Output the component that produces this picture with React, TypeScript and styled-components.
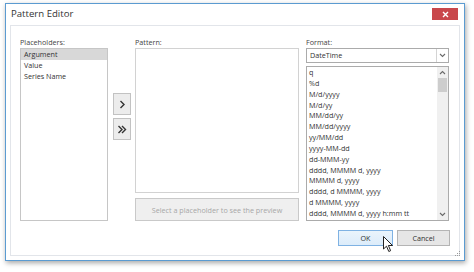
import * as React from 'react';
import styled, { createGlobalStyle } from 'styled-components';

const GlobalStyle = createGlobalStyle`
  body {
    margin: 0;
    width: 474px;
    height: 272px;
    background: #ffffff;
    font-family: "Open Sans", "Noto Sans", sans-serif;
    color: #3c3c3c;
    overflow: hidden;
  }
`;

const Window = styled.div`
  position: relative;
  margin: 3px 0 0 5px;
  width: 458px;
  height: 256px;
  border: 1px solid #5b9bd1;
  background: #ffffff;
  box-shadow: 1px 2px 5px rgba(0, 0, 0, 0.35);
  display: flex;
  flex-direction: column;
`;

const TitleBar = styled.div`
  height: 21px;
  display: flex;
  align-items: flex-start;
  justify-content: space-between;
  padding: 0 6px 0 5px;
`;

const Title = styled.span`
  font-size: 9.6px;
  line-height: 20px;
  color: #333;
`;

const CloseButton = styled.div`
  margin-top: 4px;
  width: 26px;
  height: 12px;
  background: #c9474b;
  display: flex;
  align-items: center;
  justify-content: center;
`;

const Body = styled.div`
  flex: 1;
  margin: 0 4px 4px 4px;
  border: 1px solid #e2e5ea;
  display: flex;
  flex-direction: column;
  padding: 10px 9px 0 9px;
`;

const Columns = styled.div`
  display: flex;
  height: 186px;
`;

const Column = styled.div`
  display: flex;
  flex-direction: column;
  width: ${p => p.$w}px;
  margin-left: ${p => p.$ml || 0}px;
`;

const Label = styled.div`
  font-size: 7.2px;
  line-height: 12px;
  height: 12px;
  color: #444;
`;

const ListBox = styled.div`
  height: 173px;
  border: 1px solid #c6c6c6;
  background: #fff;
  box-sizing: border-box;
`;

const ListItem = styled.div`
  font-size: 7.2px;
  line-height: 11px;
  height: 11px;
  padding-left: 3px;
  background: ${p => (p.$selected ? '#d8d8d8' : 'transparent')};
  color: #333;
`;

const ArrowColumn = styled.div`
  display: flex;
  flex-direction: column;
  gap: 3px;
  padding-top: 57px;
  margin-left: 5px;
`;

const ArrowButton = styled.div`
  width: 18px;
  height: 22px;
  box-sizing: border-box;
  border: 1px solid #c2c2c2;
  background: #ececec;
  display: flex;
  align-items: center;
  justify-content: center;
`;

const PatternBox = styled.div`
  height: 145px;
  border: 1px solid #d2d2d2;
  box-sizing: border-box;
  background: #fff;
`;

const PreviewButton = styled.div`
  margin-top: 5px;
  height: 23px;
  box-sizing: border-box;
  border: 1px solid #c9c9c9;
  background: #efefef;
  color: #a7a7a7;
  font-size: 7.2px;
  display: flex;
  align-items: center;
  justify-content: center;
`;

const Combo = styled.div`
  height: 15px;
  box-sizing: border-box;
  border: 1px solid #ababab;
  display: flex;
  background: #fff;
`;

const ComboText = styled.div`
  flex: 1;
  font-size: 7.2px;
  line-height: 13px;
  padding-left: 3px;
  color: #333;
`;

const ComboArrow = styled.div`
  width: 11px;
  border-left: 1px solid #d4d4d4;
  display: flex;
  align-items: center;
  justify-content: center;
`;

const FormatList = styled.div`
  margin-top: 3px;
  height: 155px;
  box-sizing: border-box;
  border: 1px solid #ababab;
  display: flex;
  background: #fff;
`;

const FormatItems = styled.div`
  flex: 1;
  overflow: hidden;
`;

const FormatItem = styled.div`
  font-size: 7.2px;
  line-height: 10.85px;
  height: 10.85px;
  padding-left: 2px;
  color: #333;
  white-space: nowrap;
`;

const ScrollBar = styled.div`
  width: 11px;
  background: #f0f0f0;
  display: flex;
  flex-direction: column;
  align-items: center;
`;

const ScrollArrow = styled.div`
  height: 11px;
  width: 11px;
  display: flex;
  align-items: center;
  justify-content: center;
`;

const ScrollThumb = styled.div`
  width: 9px;
  height: 14px;
  background: #cdcdcd;
  margin-bottom: auto;
`;

const Footer = styled.div`
  display: flex;
  justify-content: flex-end;
  gap: 4px;
  margin-top: 8px;
  position: relative;
`;

const DialogButton = styled.div`
  width: ${p => p.$w}px;
  height: 16px;
  box-sizing: border-box;
  border: 1px solid ${p => (p.$primary ? '#7fb2e3' : '#b4b4b4')};
  background: ${p => (p.$primary ? 'linear-gradient(#eaf4fc, #dcecfa)' : '#e6e6e6')};
  font-size: 7.2px;
  color: #333;
  display: flex;
  align-items: center;
  justify-content: center;
`;

const Cursor = styled.svg`
  position: absolute;
  left: 363px;
  top: 6px;
`;

const Grip = styled.svg`
  position: absolute;
  right: 3px;
  bottom: 3px;
`;

const Chevron = ({ dir }) => (
  <svg width="7" height="5" viewBox="0 0 7 5">
    <path
      d={dir === 'up' ? 'M1 4 L3.5 1.5 L6 4' : 'M1 1 L3.5 3.5 L6 1'}
      fill="none"
      stroke="#6a6a6a"
      strokeWidth="1.1"
    />
  </svg>
);

const placeholders = ['Argument', 'Value', 'Series Name'];

const formats = [
  'q',
  '%d',
  'M/d/yyyy',
  'M/d/yy',
  'MM/dd/yy',
  'MM/dd/yyyy',
  'yy/MM/dd',
  'yyyy-MM-dd',
  'dd-MMM-yy',
  'dddd, MMMM d, yyyy',
  'MMMM d, yyyy',
  'dddd, d MMMM, yyyy',
  'd MMMM, yyyy',
  'dddd, MMMM d, yyyy h:mm tt',
];

export default function App() {
  return (
    <>
      <GlobalStyle />
      <Window>
        <TitleBar>
          <Title>Pattern Editor</Title>
          <CloseButton>
            <svg width="7" height="7" viewBox="0 0 7 7">
              <path d="M1 1 L6 6 M6 1 L1 6" stroke="#fff" strokeWidth="1.4" />
            </svg>
          </CloseButton>
        </TitleBar>
        <Body>
          <Columns>
            <Column $w={88}>
              <Label>Placeholders:</Label>
              <ListBox>
                {placeholders.map((p, i) => (
                  <ListItem key={p} $selected={i === 0}>{p}</ListItem>
                ))}
              </ListBox>
            </Column>
            <ArrowColumn>
              <ArrowButton>
                <svg width="8" height="9" viewBox="0 0 8 9">
                  <path d="M2.5 1 L6 4.5 L2.5 8" fill="none" stroke="#333" strokeWidth="1.4" />
                </svg>
              </ArrowButton>
              <ArrowButton>
                <svg width="10" height="9" viewBox="0 0 10 9">
                  <path d="M1.5 1 L5 4.5 L1.5 8 M5 1 L8.5 4.5 L5 8" fill="none" stroke="#333" strokeWidth="1.4" />
                </svg>
              </ArrowButton>
            </ArrowColumn>
            <Column $w={164} $ml={4}>
              <Label>Pattern:</Label>
              <PatternBox />
              <PreviewButton>Select a placeholder to see the preview</PreviewButton>
            </Column>
            <Column $w={143} $ml={7}>
              <Label>Format:</Label>
              <Combo>
                <ComboText>DateTime</ComboText>
                <ComboArrow>
                  <Chevron dir="down" />
                </ComboArrow>
              </Combo>
              <FormatList>
                <FormatItems>
                  {formats.map(f => (
                    <FormatItem key={f}>{f}</FormatItem>
                  ))}
                </FormatItems>
                <ScrollBar>
                  <ScrollArrow><Chevron dir="up" /></ScrollArrow>
                  <ScrollThumb />
                  <ScrollArrow><Chevron dir="down" /></ScrollArrow>
                </ScrollBar>
              </FormatList>
            </Column>
          </Columns>
          <Footer>
            <DialogButton $w={55} $primary>OK</DialogButton>
            <DialogButton $w={53}>Cancel</DialogButton>
            <Cursor width="11" height="17" viewBox="0 0 11 17">
              <path d="M0.5 0.5 L0.5 13 L3.5 10.2 L5.8 15.5 L7.6 14.7 L5.4 9.5 L9.5 9.5 Z" fill="#fff" stroke="#222" strokeWidth="1" />
            </Cursor>
          </Footer>
          <Grip width="6" height="6" viewBox="0 0 6 6">
            <rect x="4" y="0" width="1" height="1" fill="#9a9a9a" />
            <rect x="2" y="2" width="1" height="1" fill="#9a9a9a" />
            <rect x="4" y="2" width="1" height="1" fill="#9a9a9a" />
            <rect x="0" y="4" width="1" height="1" fill="#9a9a9a" />
            <rect x="2" y="4" width="1" height="1" fill="#9a9a9a" />
            <rect x="4" y="4" width="1" height="1" fill="#9a9a9a" />
          </Grip>
        </Body>
      </Window>
    </>
  );
}
